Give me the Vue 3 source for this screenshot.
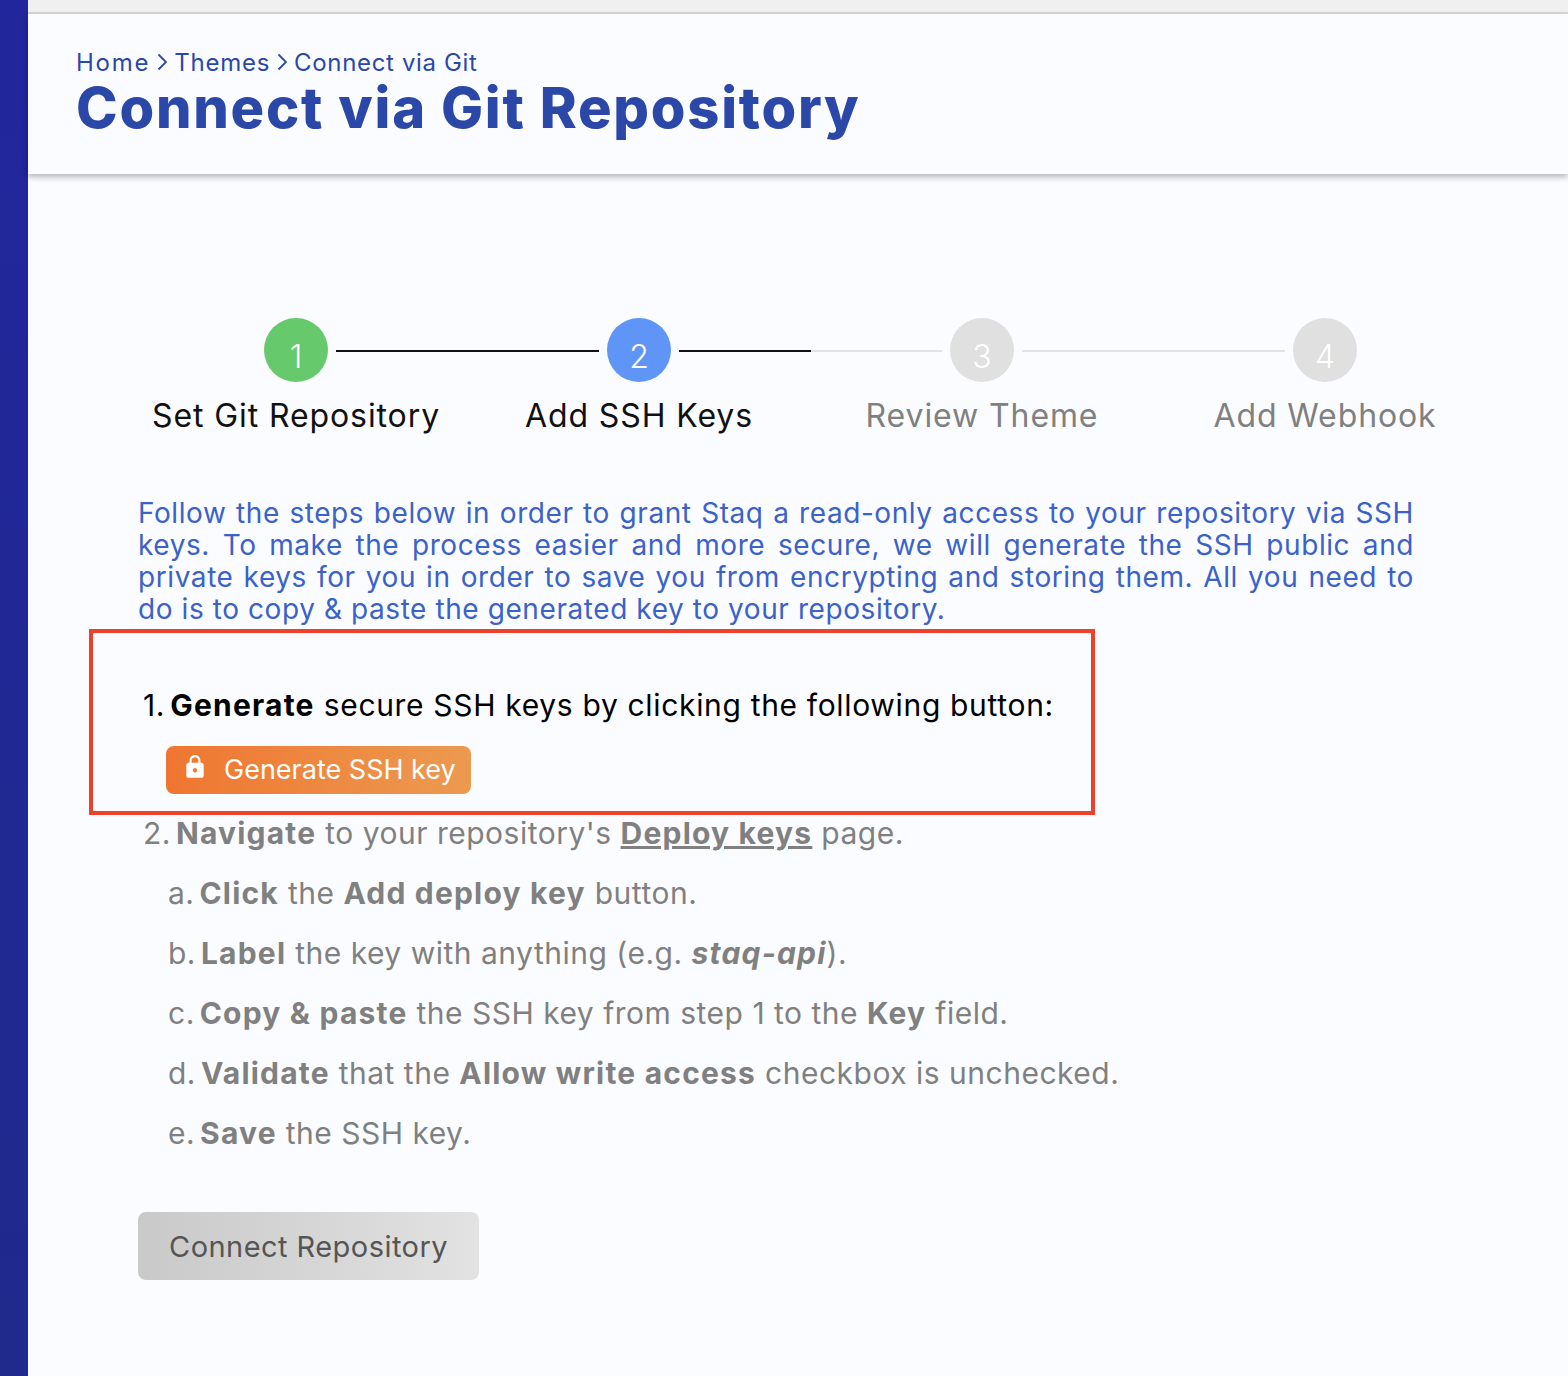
<script setup>
const steps = [
  { n: 1, label: 'Set Git Repository', state: 'done' },
  { n: 2, label: 'Add SSH Keys', state: 'active' },
  { n: 3, label: 'Review Theme', state: 'todo' },
  { n: 4, label: 'Add Webhook', state: 'todo' }
]
</script>

<template>
  <div class="page">
    <aside class="side"></aside>
    <div class="main">
      <div class="topbar"></div>
      <header class="head">
        <nav class="crumbs">
          <span>Home</span>
          <svg class="chev" viewBox="0 0 10 18"><path d="M1.5 1.5L9 9l-7.5 7.5" /></svg>
          <span>Themes</span>
          <svg class="chev" viewBox="0 0 10 18"><path d="M1.5 1.5L9 9l-7.5 7.5" /></svg>
          <span>Connect via Git</span>
        </nav>
        <h1>Connect via Git Repository</h1>
      </header>

      <section class="content">
        <ol class="stepper">
          <li v-for="s in steps" :key="s.n" class="step" :class="s.state">
            <div class="track">
              <span class="line before"></span>
              <span class="dot">{{ s.n }}</span>
              <span class="line after"></span>
            </div>
            <div class="label">{{ s.label }}</div>
          </li>
        </ol>

        <p class="intro">Follow the steps below in order to grant Staq a read-only access to your repository via SSH keys. To make the process easier and more secure, we will generate the SSH public and private keys for you in order to save you from encrypting and storing them. All you need to do is to copy &amp; paste the generated key to your repository.</p>

        <div class="highlight">
          <div class="first"><span class="n">1. </span><b>Generate</b> secure SSH keys by clicking the following button:</div>
          <button class="gen">
            <svg class="lock" viewBox="0 0 24 24"><path d="M18 8h-1V6c0-2.76-2.24-5-5-5S7 3.24 7 6v2H6c-1.1 0-2 .9-2 2v10c0 1.1.9 2 2 2h12c1.1 0 2-.9 2-2V10c0-1.1-.9-2-2-2zm-6 9c-1.1 0-2-.9-2-2s.9-2 2-2 2 .9 2 2-.9 2-2 2zm3.1-9H8.9V6c0-1.71 1.39-3.1 3.1-3.1 1.71 0 3.1 1.39 3.1 3.1v2z" /></svg>
            <span>Generate SSH key</span>
          </button>
        </div>

        <div class="rest">
          <div class="item"><span class="n">2. </span><b>Navigate</b> to your repository's <b class="u">Deploy keys</b> page.</div>
          <div class="item sub"><span class="n">a. </span><b>Click</b> the <b>Add deploy key</b> button.</div>
          <div class="item sub"><span class="n">b. </span><b>Label</b> the key with anything (e.g. <b><i>staq-api</i></b>).</div>
          <div class="item sub"><span class="n">c. </span><b>Copy &amp; paste</b> the SSH key from step 1 to the <b>Key</b> field.</div>
          <div class="item sub"><span class="n">d. </span><b>Validate</b> that the <b>Allow write access</b> checkbox is unchecked.</div>
          <div class="item sub"><span class="n">e. </span><b>Save</b> the SSH key.</div>
        </div>

        <button class="connect">Connect Repository</button>
      </section>
    </div>
  </div>
</template>

<style>
html, body { margin: 0; background: #fbfcff; }
</style>

<style scoped>
.page {
  display: flex;
  height: 1376px;
  overflow: hidden;
  font-family: Inter, "Noto Sans", sans-serif;
  background: #fbfcff;
}
.side {
  width: 28px;
  flex: none;
  background: linear-gradient(180deg, #22269c 0%, #1f2a8c 100%);
}
.main { flex: 1; min-width: 0; }
.topbar {
  height: 12px;
  background: #f0f0f0;
  border-bottom: 2px solid #d6d6d6;
}
.head {
  height: 160px;
  box-sizing: border-box;
  padding: 32px 0 0 48px;
  box-shadow: 0 3px 6px rgba(0, 0, 0, 0.28);
}
.crumbs {
  display: flex;
  align-items: center;
  gap: 7px;
  height: 32px;
  font-size: 24px;
  letter-spacing: 0.75px;
  color: #2b47a8;
}
.crumbs span:first-child { letter-spacing: 1.75px; }
.crumbs span:last-child { letter-spacing: 0.65px; }
.chev { width: 10px; height: 18px; }
.chev path { fill: none; stroke: #2b47a8; stroke-width: 1.8; }
h1 {
  margin: 0;
  font-size: 56px;
  line-height: 60px;
  font-weight: 800;
  letter-spacing: 1.78px;
  color: #2b47a8;
}
.content { padding: 144px 0 0 110px; }
.stepper {
  list-style: none;
  margin: 0 0 0 -13.5px;
  padding: 0;
  display: flex;
  width: 1372px;
}
.step { width: 343px; display: flex; flex-direction: column; align-items: center; }
.track { display: flex; align-items: center; width: 100%; gap: 8px; }
.line { flex: 1; height: 2px; margin-top: 1px; background: #e2e2e2; }
.step:first-child .before, .step:last-child .after { visibility: hidden; }
.done .line.after { background: #111; }
.active .line.before { background: #111; }
.active .line.after { background: #111; }
.dot {
  width: 64px;
  height: 64px;
  flex: none;
  border-radius: 50%;
  display: flex;
  align-items: center;
  justify-content: center;
  padding-top: 12px;
  box-sizing: border-box;
  color: #fff;
  font-size: 32px;
  font-weight: 300;
  background: #e0e0e0;
}
.done .dot { background: #66c96c; }
.active .dot { background: #6095f8; }
.label {
  margin-top: 14px;
  font-size: 32px;
  line-height: 40px;
  white-space: nowrap;
  letter-spacing: 0.9px;
  color: #111;
}
.todo .label { color: #808080; }
.intro {
  margin: 61px 0 0 0;
  width: 1276px;
  font-size: 28px;
  line-height: 32px;
  letter-spacing: 0.58px;
  text-align: justify;
  color: #3a62c9;
}
.highlight {
  box-sizing: border-box;
  width: 1006px;
  height: 186px;
  margin: 4px 0 0 -49px;
  border: 4px solid #ee4129;
  padding: 52px 0 0 50px;
}
.first {
  font-size: 30px;
  line-height: 40px;
  letter-spacing: 0.67px;
  color: #000;
  white-space: nowrap;
}
.first b { font-weight: 700; letter-spacing: 1.2px; }
.n { word-spacing: -4px; }
.gen {
  display: flex;
  align-items: center;
  width: 305px;
  height: 48px;
  margin: 21px 0 0 23px;
  padding: 0 0 2px 16px;
  border: 0;
  border-radius: 8px;
  background: linear-gradient(90deg, #ef7630, #ec9a50);
  color: #fff;
  font: inherit;
  font-size: 27px;
}
.lock { width: 26px; height: 26px; margin: -4px 16px 0 0; fill: #fff; }
.rest { margin: -1px 0 0 5px; color: #808080; font-size: 30px; letter-spacing: 0.5px; }
.item { height: 60px; line-height: 38px; white-space: nowrap; }
.item b { font-weight: 700; letter-spacing: 1.2px; }
.u { text-decoration: underline; }
.sub { margin-left: 25px; }
.rest .item:last-child { height: 98px; }
.connect {
  display: block;
  width: 341px;
  height: 68px;
  border: 0;
  border-radius: 8px;
  background: linear-gradient(90deg, #c9c9c9, #e2e2e2);
  color: #555;
  font: inherit;
  font-size: 29px;
  letter-spacing: 0.45px;
}
</style>
